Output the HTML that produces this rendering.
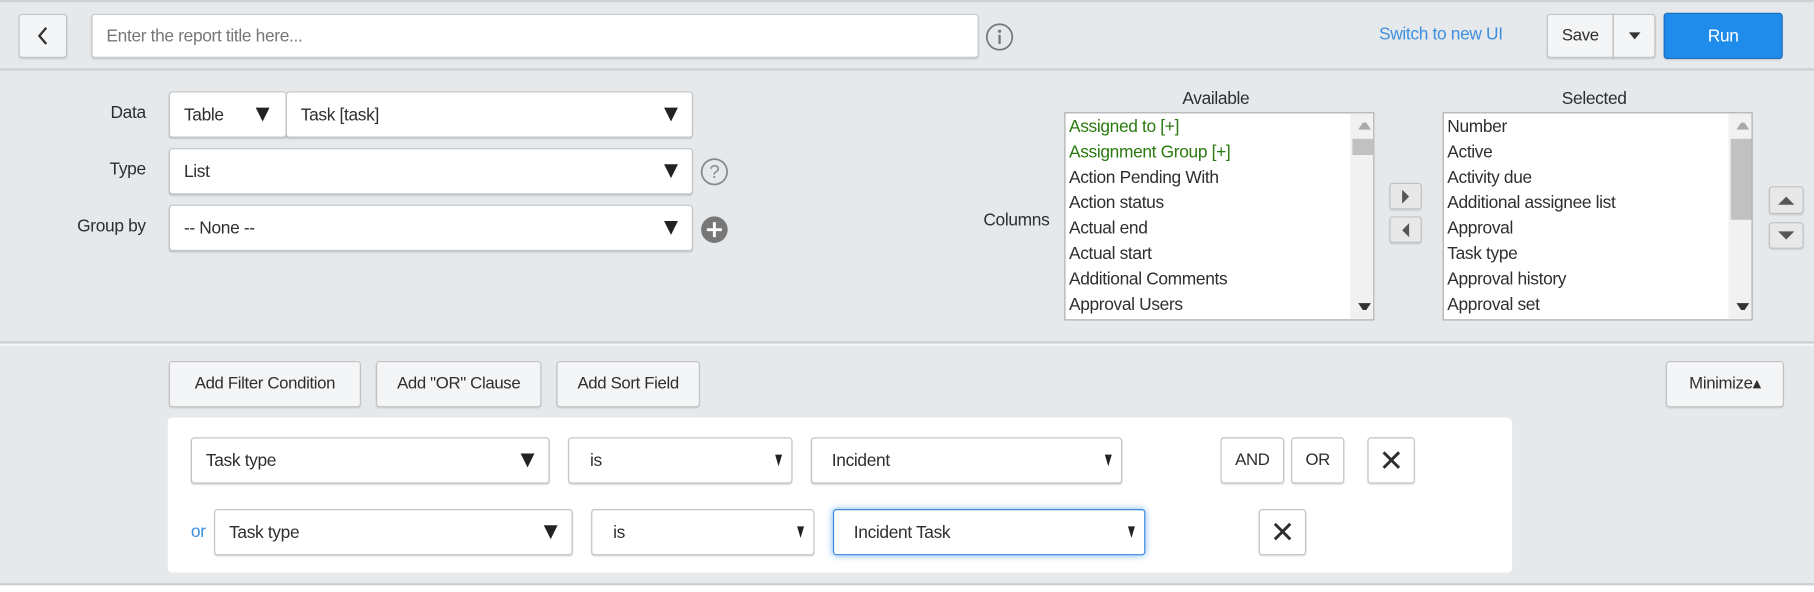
<!DOCTYPE html>
<html><head><meta charset="utf-8"><style>
*{box-sizing:border-box;margin:0;padding:0}
html,body{width:1814px;height:592px;overflow:hidden;background:#e6e9ec}
#w{position:absolute;left:0;top:0;width:1568px;height:512px;transform:scale(1.15689);transform-origin:0 0;font-family:"Liberation Sans Narrow","Liberation Sans",sans-serif;font-size:15px;letter-spacing:-0.3px;color:#2e2e2e;background:#e6e9ec}
.a{position:absolute}
.box{position:absolute;background:#fff;border:1px solid #c8c8c8;border-radius:3px;box-shadow:0 1px 1px rgba(0,0,0,.12)}
.btn{position:absolute;background:#f4f5f6;border:1px solid #c2c2c2;border-radius:3px;box-shadow:0 1px 1px rgba(0,0,0,.1);display:flex;align-items:center;justify-content:center;font-size:14.5px;color:#2e2e2e}
.sel{position:absolute;background:#fff;border:1px solid #c4c4c4;border-radius:3px;box-shadow:0 1px 1px rgba(0,0,0,.15);padding-left:12px;display:flex;align-items:center;font-size:15px}
.tri{position:absolute;right:12px;top:50%;margin-top:-6px;width:0;height:0;border-left:6px solid transparent;border-right:6px solid transparent;border-top:12px solid #222}
.tris{position:absolute;right:8px;top:50%;margin-top:-5px;width:0;height:0;border-left:3px solid transparent;border-right:3px solid transparent;border-top:10px solid #222}
.lbl{position:absolute;text-align:right;width:110px;font-size:15px}
.list{position:absolute;background:#fff;border:1px solid #a9a9a9;overflow:hidden;padding-top:1px}
.list div{height:22px;line-height:22px;padding-left:3px;font-size:15px;white-space:nowrap}
.sb{position:absolute;right:0;top:0;width:20px;height:100%;background:#f1f1f1}
.x{font-size:26px;font-family:"Liberation Sans",sans-serif}
</style></head><body><div id="w">
<div class="a" style="left:0;top:0;width:1568px;height:2px;background:#cfd2d5"></div>
<div class="a" style="left:0;top:59px;width:1568px;height:2px;background:#cdd0d3"></div>
<div class="btn" style="left:16px;top:12px;width:42px;height:38px"><svg width="14" height="18" viewBox="0 0 14 18"><path d="M10 2 L4 9 L10 16" stroke="#333" stroke-width="2" fill="none"/></svg></div>
<div class="box" style="left:79px;top:12px;width:767px;height:38px;padding-left:12px;display:flex;align-items:center;color:#777;font-size:15px">Enter the report title here...</div>
<svg class="a" style="left:852px;top:20px" width="24" height="24"><circle cx="12" cy="12" r="11" fill="none" stroke="#777" stroke-width="1.5"/><circle cx="12" cy="7" r="1.4" fill="#777"/><path d="M12 10v8" stroke="#777" stroke-width="2"/></svg>
<div class="a" style="left:1192px;top:21px;color:#3d8fdf;font-size:15px">Switch to new UI</div>
<div class="btn" style="left:1337px;top:12px;width:58px;height:38px;border-radius:3px 0 0 3px">Save</div>
<div class="btn" style="left:1394px;top:12px;width:37px;height:38px;border-radius:0 3px 3px 0"><div style="width:0;height:0;border-left:5px solid transparent;border-right:5px solid transparent;border-top:6px solid #333"></div></div>
<div class="btn" style="left:1438px;top:11px;width:103px;height:40px;background:#1f8ceb;border-color:#1a6fc0;color:#fff;font-size:15px">Run</div>

<div class="lbl" style="left:16px;top:89px">Data</div>
<div class="lbl" style="left:16px;top:138px">Type</div>
<div class="lbl" style="left:16px;top:187px">Group by</div>
<div class="sel" style="left:146px;top:79px;width:102px;height:40px">Table<div class="tri" style="right:14px"></div></div>
<div class="sel" style="left:247px;top:79px;width:352px;height:40px">Task [task]<div class="tri"></div></div>
<div class="sel" style="left:146px;top:128px;width:453px;height:40px">List<div class="tri"></div></div>
<div class="sel" style="left:146px;top:177px;width:453px;height:40px">-- None --<div class="tri"></div></div>
<svg class="a" style="left:605px;top:136px" width="25" height="25"><circle cx="12.5" cy="12.5" r="11" fill="none" stroke="#888" stroke-width="1.5"/><text x="12.5" y="18" text-anchor="middle" font-size="16" fill="#888" font-family="Liberation Sans">?</text></svg>
<svg class="a" style="left:605px;top:186px" width="25" height="25"><circle cx="12.5" cy="12.5" r="11.5" fill="#777"/><path d="M12.5 6v13M6 12.5h13" stroke="#fff" stroke-width="2.5"/></svg>

<div class="a" style="left:1022px;top:77px;font-size:15px">Available</div>
<div class="a" style="left:1350px;top:77px;font-size:15px">Selected</div>
<div class="a" style="left:850px;top:182px;font-size:15px">Columns</div>
<div class="list" style="left:920px;top:97px;width:268px;height:180px"><div style="color:#2a7a10">Assigned to [+]</div><div style="color:#2a7a10">Assignment Group [+]</div><div>Action Pending With</div><div>Action status</div><div>Actual end</div><div>Actual start</div><div>Additional Comments</div><div>Approval Users</div><div class="sb" style="height:100%;padding:0"><div style="position:absolute;left:2px;top:22px;width:18px;height:14px;background:#c1c1c1"></div><div style="position:absolute;left:7px;top:8px;border-left:4px solid transparent;border-right:4px solid transparent;border-bottom:6px solid #aaa;width:0;height:0"></div><div style="position:absolute;left:7px;bottom:8px;border-left:4px solid transparent;border-right:4px solid transparent;border-top:6px solid #333;width:0;height:0"></div></div></div>
<div class="list" style="left:1247px;top:97px;width:268px;height:180px"><div>Number</div><div>Active</div><div>Activity due</div><div>Additional assignee list</div><div>Approval</div><div>Task type</div><div>Approval history</div><div>Approval set</div><div class="sb" style="height:100%;padding:0"><div style="position:absolute;left:2px;top:22px;width:18px;height:70px;background:#c1c1c1"></div><div style="position:absolute;left:7px;top:8px;border-left:4px solid transparent;border-right:4px solid transparent;border-bottom:6px solid #aaa;width:0;height:0"></div><div style="position:absolute;left:7px;bottom:8px;border-left:4px solid transparent;border-right:4px solid transparent;border-top:6px solid #333;width:0;height:0"></div></div></div>
<div class="btn" style="left:1201px;top:158px;width:28px;height:23px;background:#e8e8e8"><div style="border-top:6px solid transparent;border-bottom:6px solid transparent;border-left:6px solid #555"></div></div>
<div class="btn" style="left:1201px;top:187px;width:28px;height:23px;background:#e8e8e8"><div style="border-top:6px solid transparent;border-bottom:6px solid transparent;border-right:6px solid #555"></div></div>
<div class="btn" style="left:1529px;top:161px;width:30px;height:24px;background:#e8e8e8"><div style="border-left:7px solid transparent;border-right:7px solid transparent;border-bottom:7px solid #555"></div></div>
<div class="btn" style="left:1529px;top:192px;width:30px;height:23px;background:#e8e8e8"><div style="border-left:7px solid transparent;border-right:7px solid transparent;border-top:7px solid #555"></div></div>

<div class="a" style="left:0;top:295px;width:1568px;height:2px;background:#cdd0d3"></div>
<div class="a" style="left:0;top:297px;width:1568px;height:2px;background:#f3f4f5"></div>
<div class="btn" style="left:146px;top:312px;width:166px;height:40px">Add Filter Condition</div>
<div class="btn" style="left:325px;top:312px;width:143px;height:40px">Add "OR" Clause</div>
<div class="btn" style="left:481px;top:312px;width:124px;height:40px">Add Sort Field</div>
<div class="btn" style="left:1440px;top:312px;width:102px;height:40px">Minimize&#9652;</div>

<div class="a" style="left:145px;top:361px;width:1162px;height:134px;background:#fff;border-radius:4px"></div>
<div class="sel" style="left:165px;top:378px;width:310px;height:40px">Task type<div class="tri"></div></div>
<div class="sel" style="left:491px;top:378px;width:194px;height:40px;padding-left:18px">is<div class="tris"></div></div>
<div class="sel" style="left:701px;top:378px;width:269px;height:40px;padding-left:17px">Incident<div class="tris"></div></div>
<div class="btn" style="left:1055px;top:378px;width:55px;height:40px;background:#fff">AND</div>
<div class="btn" style="left:1116px;top:378px;width:46px;height:40px;background:#fff">OR</div>
<div class="btn x" style="left:1182px;top:378px;width:41px;height:40px;background:#fff">✕</div>
<div class="a" style="left:165px;top:451px;color:#3d8fdf;font-size:15px">or</div>
<div class="sel" style="left:185px;top:440px;width:310px;height:40px">Task type<div class="tri"></div></div>
<div class="sel" style="left:511px;top:440px;width:193px;height:40px;padding-left:18px">is<div class="tris"></div></div>
<div class="sel" style="left:720px;top:440px;width:270px;height:40px;padding-left:17px;border:1.5px solid #3a8be0;box-shadow:0 0 6px rgba(40,130,230,.6)">Incident Task<div class="tris"></div></div>
<div class="btn x" style="left:1088px;top:440px;width:41px;height:40px;background:#fff">✕</div>
<div class="a" style="left:0;top:504px;width:1568px;height:2px;background:#cdd0d3"></div>
<div class="a" style="left:0;top:506px;width:1568px;height:6px;background:#fff"></div>
</div></body></html>
